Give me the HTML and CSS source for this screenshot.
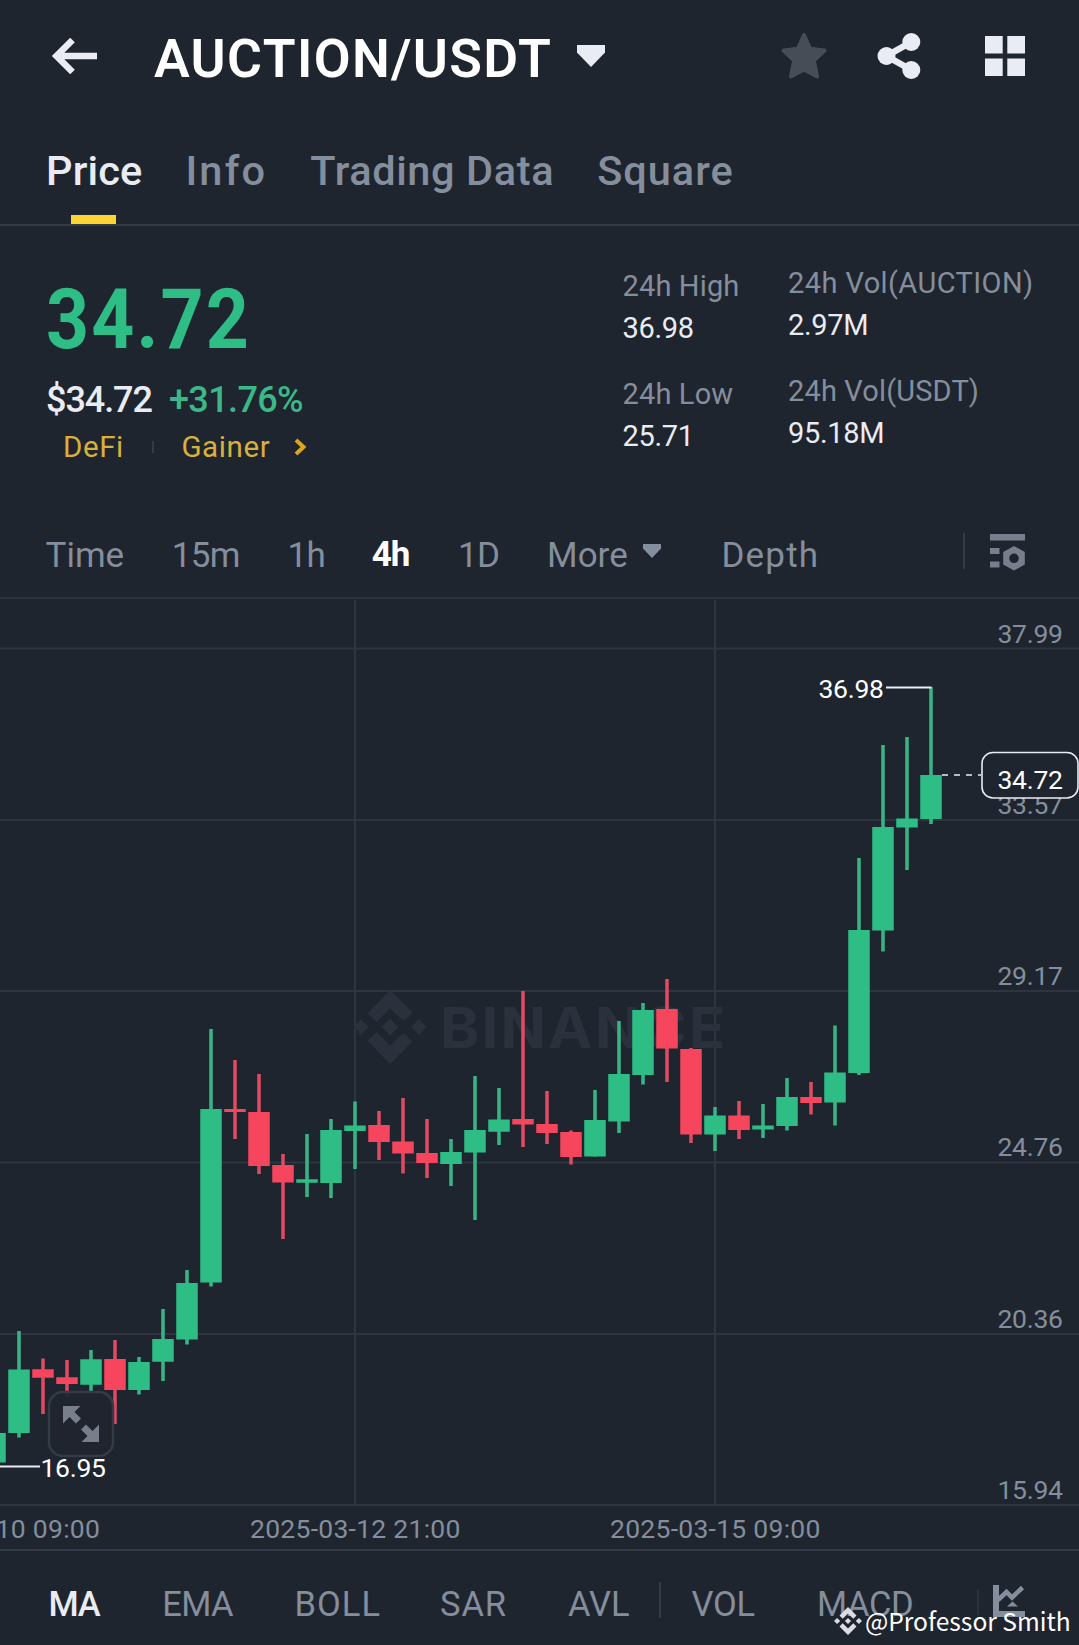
FILE: index.html
```
<!DOCTYPE html>
<html lang="en">
<head>
<meta charset="utf-8">
<title>AUCTION/USDT</title>
<link rel="stylesheet" href="styles.css">
</head>
<body>
<div class="app">
  <header class="header">
    <svg class="back" width="48" height="38" viewBox="0 0 48 38"><path d="M47 19H6M22.5 3L6.5 19l16 16" fill="none" stroke="#eaecf3" stroke-width="6.6"/></svg>
    <h1 class="title">AUCTION/USDT</h1>
    <svg class="caret" width="28" height="22" viewBox="0 0 28 22"><path d="M0 0H28V7.500L14 22L0 7.500Z" fill="#eaecf3"/></svg>
    <div class="actions">
      <svg width="46" height="48" viewBox="0 0 46 48"><path d="M23 3l6.200 13.800L43.500 18.500 32.800 28.500 36 44.500 23 37.500 10 44.500 13.200 28.500 2.500 18.500 16.800 16.800Z" fill="#474d57" stroke="#474d57" stroke-width="4" stroke-linejoin="round"/></svg>
      <svg width="44" height="46" viewBox="0 0 44 46"><path d="M34.300 9L9.500 23L34.300 37" fill="none" stroke="#eaecf3" stroke-width="6.500"/><g fill="#eaecf3"><circle cx="34.300" cy="9" r="9"/><circle cx="9.500" cy="23" r="9"/><circle cx="34.300" cy="37" r="9"/></g></svg>
      <svg width="40" height="40" viewBox="0 0 40 40"><path d="M0 0h17.700v17.500H0zM22.300 0H40v17.500H22.300zM0 22.500h17.700V40H0zM22.300 22.500H40V40H22.300z" fill="#eaecf3"/></svg>
    </div>
  </header>

  <nav class="tabs">
    <span class="tab tab-active">Price</span>
    <span class="tab tab-info">Info</span>
    <span class="tab tab-trading">Trading Data</span>
    <span class="tab tab-square">Square</span>
  </nav>

  <section class="summary">
    <div class="quote">
      <div class="price">34.72</div>
      <div class="change"><span class="usd">$34.72</span><span class="pct">+31.76%</span></div>
      <div class="tags">
        <span>DeFi</span><i class="tag-sep"></i><span>Gainer</span>
        <svg class="chevron" width="13" height="18" viewBox="0 0 13 18"><path d="M2 2l7.500 7L2 16" fill="none" stroke="#d9a81f" stroke-width="4"/></svg>
      </div>
    </div>
    <div class="stats">
      <div class="stat"><span class="label">24h High</span><span class="value">36.98</span></div>
      <div class="stat"><span class="label">24h Low</span><span class="value">25.71</span></div>
    </div>
    <div class="stats stats-vol">
      <div class="stat"><span class="label label-wide">24h Vol(AUCTION)</span><span class="value">2.97M</span></div>
      <div class="stat"><span class="label">24h Vol(USDT)</span><span class="value">95.18M</span></div>
    </div>
  </section>

  <nav class="intervals">
    <span>Time</span>
    <span class="tight">15m</span>
    <span class="tight">1h</span>
    <span class="selected">4h</span>
    <span class="tight">1D</span>
    <span class="more">More<svg width="18" height="14" viewBox="0 0 18 14"><path d="M0 0H18V4.500L9 14L0 4.500Z" fill="#848e9c"/></svg></span>
    <span class="depth">Depth</span>
    <i class="rule"></i>
    <svg class="settings" width="35" height="37" viewBox="0 0 35 37"><g fill="#777e8c"><path d="M0 0h35v6.500H0zM0 14h9.500v6H0zM0 27.500h9.500v6H0z"/><path fill-rule="evenodd" d="M24 12l10.800 6v12.500L24 36.500l-10.800-6V18zM24 19.500a4.800 4.800 0 1 0 0 9.600a4.800 4.800 0 1 0 0-9.600z"/></g></svg>
  </nav>

  <svg class="chart" width="1079" height="952" viewBox="0 599 1079 952">
    <path class="grid" d="M355 600V1505M715 600V1505M0 648.500H1079M0 820H1079M0 991H1079M0 1162.500H1079M0 1334H1079M0 1505H1079"/>
    <path class="frame" d="M0 1550H1079"/>

    <g class="brand">
      <path d="M390 990l22.500 22.500-9 8.500L390 1008.500 376.500 1022l-9-8.500zM390 1064l22.500-22.500-9-8.500L390 1045.500 376.500 1032l-9 8.500zM390 1018.500l8 8.500-8 8.500-8-8.500zM361 1019l7.500 8-7.500 8-7.500-8zM419 1019l7.500 8-7.500 8-7.500-8z"/>
      <text x="440" y="1048" textLength="287" lengthAdjust="spacingAndGlyphs">BINANCE</text>
    </g>

    <g class="axis">
      <text x="997.500" y="642.500">37.99</text>
      <text x="997.500" y="813.500">33.57</text>
      <text x="997.500" y="985">29.17</text>
      <text x="997.500" y="1156">24.76</text>
      <text x="997.500" y="1328">20.36</text>
      <text x="997.500" y="1499">15.94</text>
    </g>
    <g class="dates">
      <text x="-110.500" y="1538">2025-03-10 09:00</text>
      <text x="250" y="1538">2025-03-12 21:00</text>
      <text x="610" y="1538">2025-03-15 09:00</text>
    </g>

    <path class="wick up" d="M19 1331V1437.500M91 1350V1391M139 1357V1394.500M163 1309V1381M187 1270V1344.500M211 1029V1286.500M307 1134V1197M331 1119V1198M355 1101.500V1169M451 1139V1186M475 1076V1220M499 1088V1145M595 1090V1156.500M619 1021V1133M643 1003V1084.500M715 1107V1151M763 1104V1138M787 1078V1130.500M835 1025.500V1125.500M859 858V1075M883 745V951.500M907 737V870M931 687V824"/>
    <path class="wick down" d="M43 1358.500V1414M67 1360V1397M115 1340V1424M235 1060V1139M259 1074V1174M283 1154V1239M379 1111V1160M403 1098V1173.500M427 1119V1178M523 991V1147M547 1091V1144M571 1130.500V1164.500M667 979V1082M691 1048V1143M739 1101V1139M811 1082V1114.500"/>
    <path class="body up" d="M-5 1433V1462.500M19 1369.500V1433M91 1359.300V1384.700M139 1362V1390M163 1339V1361.700M187 1283V1339.500M211 1109V1282.500M307 1179.300V1182.700M331 1130V1183M355 1125.500V1131M451 1152V1164M475 1130V1152.500M499 1119.500V1131.700M595 1120V1156.500M619 1074V1121.500M643 1010V1075M715 1115.500V1134.500M763 1125.500V1129.500M787 1097V1126M835 1072.500V1102.500M859 930V1073M883 827V930.500M907 818.500V827.500M931 775V819"/>
    <path class="body down" d="M43 1369.200V1377.700M67 1377.300V1384M115 1359V1390M235 1109V1112M259 1112V1166M283 1165V1182.500M379 1125V1142M403 1141.500V1153.500M427 1153V1163M523 1119V1124.500M547 1124V1133M571 1132V1157M667 1009V1048.500M691 1049V1134.500M739 1115.500V1130M811 1097V1103"/>

    <path class="leader" d="M886 687.500H931.500M0 1466.500H40"/>
    <path class="leader dashed" d="M942 775H981"/>
    <rect class="tag" x="982" y="752.500" width="96" height="45.500" rx="11"/>
    <g class="marks">
      <text x="818.500" y="697.500">36.98</text>
      <text x="40.500" y="1477">16.95</text>
      <text x="997.500" y="789">34.72</text>
    </g>

    <rect class="expand" x="49" y="1392" width="64" height="64" rx="14"/>
    <path d="M63 1406h17.500l-6 6 6.500 6.500-5 5-6.500-6.500-6.500 6.500zM99 1442h-17.500l6-6-6.500-6.500 5-5 6.500 6.500 6.500-6.500z" fill="#777e8c"/>
  </svg>

  <nav class="indicators">
    <span class="ma">MA</span>
    <span class="ema">EMA</span>
    <span class="boll">BOLL</span>
    <span class="sar">SAR</span>
    <span class="avl">AVL</span>
    <i class="rule rule-mid"></i>
    <span class="vol">VOL</span>
    <span class="macd">MACD</span>
    <i class="rule rule-end"></i>
    <svg class="chart-icon" width="32" height="32" viewBox="0 0 32 32"><g fill="#848e9c"><path d="M0 0h6v26h26v6H0z"/><path d="M14 21.500l5.500-5 5.500 5z"/></g><path d="M5 15l8.500-8 5.500 5.500L29.500 2.500" fill="none" stroke="#848e9c" stroke-width="4.500"/></svg>
    <div class="credit">
      <svg width="28" height="28" viewBox="0 0 28 28"><path fill="#dcdde0" d="M14 0l8.500 8.500-3.200 3.200L14 6.400 8.700 11.700 5.500 8.500zM14 28l8.500-8.500-3.200-3.200L14 21.600 8.700 16.300 5.500 19.500zM14 10.900l3.100 3.100-3.100 3.100-3.100-3.100zM3.100 10.900L6.200 14l-3.100 3.100L0 14zM24.900 10.900L28 14l-3.100 3.100L21.800 14z"/></svg>
      <span>@Professor Smith</span>
    </div>
  </nav>
</div>
</body>
</html>
```
FILE: styles.css
```
* { box-sizing: border-box; }

body {
  margin: 0;
  background: #1f252f;
  color: #848e9c;
  font-family: Roboto, "Liberation Sans", sans-serif;
}

svg { display: block; flex: none; }

.app {
  width: 1079px;
  height: 1645px;
  overflow: hidden;
  white-space: nowrap;
}

/* Header */
.header {
  display: flex;
  align-items: center;
  height: 112px;
  padding: 0 54px 0 51px;
}

.back { margin-left: -1px; }

.title {
  width: 402px;
  margin: 0 0 0 56px;
  padding-top: 5px;
  color: #fff;
  font-size: 53.5px;
  font-weight: 600;
  line-height: 64px;
  letter-spacing: 1.35px;
}

.caret { margin-left: 21px; }

.actions {
  display: flex;
  align-items: center;
  margin-left: auto;
  gap: 50px;
}

.actions svg:last-child { margin-left: 14.5px; }

/* Section tabs */
.tabs {
  display: flex;
  align-items: center;
  gap: 43px;
  height: 114px;
  padding: 5px 46px 0;
  border-bottom: 2px solid #333b47;
  font-size: 41.5px;
  font-weight: 500;
}

.tab { height: 107px; line-height: 107px; }

.tab-active {
  position: relative;
  color: #eaecf3;
  letter-spacing: 0.15px;
}

.tab-active::after {
  content: "";
  position: absolute;
  left: 25px;
  bottom: 0;
  width: 45px;
  height: 9px;
  background: #fcd535;
}

.tab-info { letter-spacing: 2.2px; }
.tab-trading { letter-spacing: 0.6px; }
.tab-square { letter-spacing: 1px; }

/* Price summary */
.summary {
  display: flex;
  height: 287px;
}

.quote { width: 622.5px; padding: 52px 0 0 46px; }

.price {
  color: #2ebd85;
  font-size: 84px;
  font-weight: 700;
  line-height: 84px;
  letter-spacing: 2.4px;
  transform: scaleX(0.895);
  transform-origin: 0 0;
}

.change {
  display: flex;
  gap: 17px;
  margin-top: 18px;
  font-size: 36px;
  font-weight: 500;
  line-height: 40px;
}

.usd { color: #eaecf3; letter-spacing: -1.07px; }
.pct { color: #3cb888; letter-spacing: -0.6px; }

.tags {
  display: flex;
  align-items: center;
  margin-top: 9px;
  padding-left: 17px;
  color: #d9b13a;
  font-size: 29.5px;
  line-height: 36px;
  letter-spacing: 0.6px;
}

.tag-sep {
  width: 2.5px;
  height: 12px;
  margin: 0 27px 0 28px;
  background: #333b47;
}

.chevron { margin-left: 24px; }

.stats { width: 165.500px; padding-top: 42px; }
.stats-vol { width: 260px; padding-top: 39px; }

.stat {
  display: flex;
  flex-direction: column;
  gap: 6px;
  margin-bottom: 30px;
  font-size: 29px;
  line-height: 36px;
}

.label { letter-spacing: 0.15px; }
.label-wide { letter-spacing: 0.41px; }
.value { color: #eaecf3; letter-spacing: -0.3px; }

/* Interval row */
.intervals {
  display: flex;
  align-items: center;
  gap: 47.7px;
  height: 86px;
  padding: 1.5px 0 0 45.5px;
  border-bottom: 2px solid #2b323d;
  font-size: 35px;
  line-height: 82px;
}

.tight { letter-spacing: -0.67px; }
.selected { margin: -2px 1px 0 -1px; color: #fff; font-weight: 700; letter-spacing: -1.08px; }
.more { display: flex; align-items: center; gap: 15px; }
.more svg { margin-top: -9px; }
.depth { margin-left: 13px; letter-spacing: 1.2px; }

.rule { width: 2px; height: 36px; background: #333b47; }
.intervals .rule { margin: -9px 0 0 96px; }
.settings { margin: -7px 0 0 -22.5px; }

/* Candlestick chart */
.grid { fill: none; stroke: #2e3540; stroke-width: 2; }
.frame { stroke: #333b47; stroke-width: 2; }
.brand { fill: #2b313c; }
.brand text { font: 700 56.500px Inter, sans-serif; letter-spacing: 2px; }

.axis, .dates, .marks { font-size: 26.5px; letter-spacing: -0.29px; }
.axis, .dates { fill: #848e9c; }
.dates { letter-spacing: 0.27px; }
.marks { fill: #fff; }

.wick { fill: none; stroke-width: 3.5; }
.body { fill: none; stroke-width: 21.500; }
.body.up { stroke: #2ebd85; }
.body.down { stroke: #f6465d; }
.wick.up { stroke: #38b587; }
.wick.down { stroke: #e04b62; }

.leader { fill: none; stroke: #eaecf3; stroke-width: 1.8; }
.dashed { stroke-width: 1.5; stroke-dasharray: 6 6; }
.tag { fill: #1f252f; stroke: #eaecf3; stroke-width: 1.6; }
.expand { fill: #1f252f; fill-opacity: 0.9; stroke: #333b47; stroke-width: 2.5; }

/* Indicator row */
.indicators {
  position: relative;
  display: flex;
  align-items: center;
  gap: 61px;
  height: 94px;
  padding: 12px 0 0 48.5px;
  font-size: 34.5px;
}

.ma { color: #eaecf3; font-weight: 500; letter-spacing: -1.1px; }
.ema { margin-left: 1.5px; letter-spacing: -0.6px; }
.boll { margin-left: 0.5px; letter-spacing: 1.06px; }
.sar { margin-left: -2px; letter-spacing: 0.9px; }
.vol { letter-spacing: -0.24px; }
.macd { margin-left: 1px; letter-spacing: -0.4px; }
.rule-mid { margin: -8px -30.5px 0 -31.5px; }
.rule-end { height: 26px; margin: -4px 0 0 3px; opacity: 0.6; }
.chart-icon { margin: -6px 0 0 -47.5px; }

.credit {
  position: absolute;
  left: 834px;
  top: 51px;
  display: flex;
  align-items: center;
  gap: 3px;
  height: 36px;
  color: #fff;
  font: 400 24.6px/36px "Noto Sans CJK SC", sans-serif;
}

.credit svg { margin-top: 2px; }
```
